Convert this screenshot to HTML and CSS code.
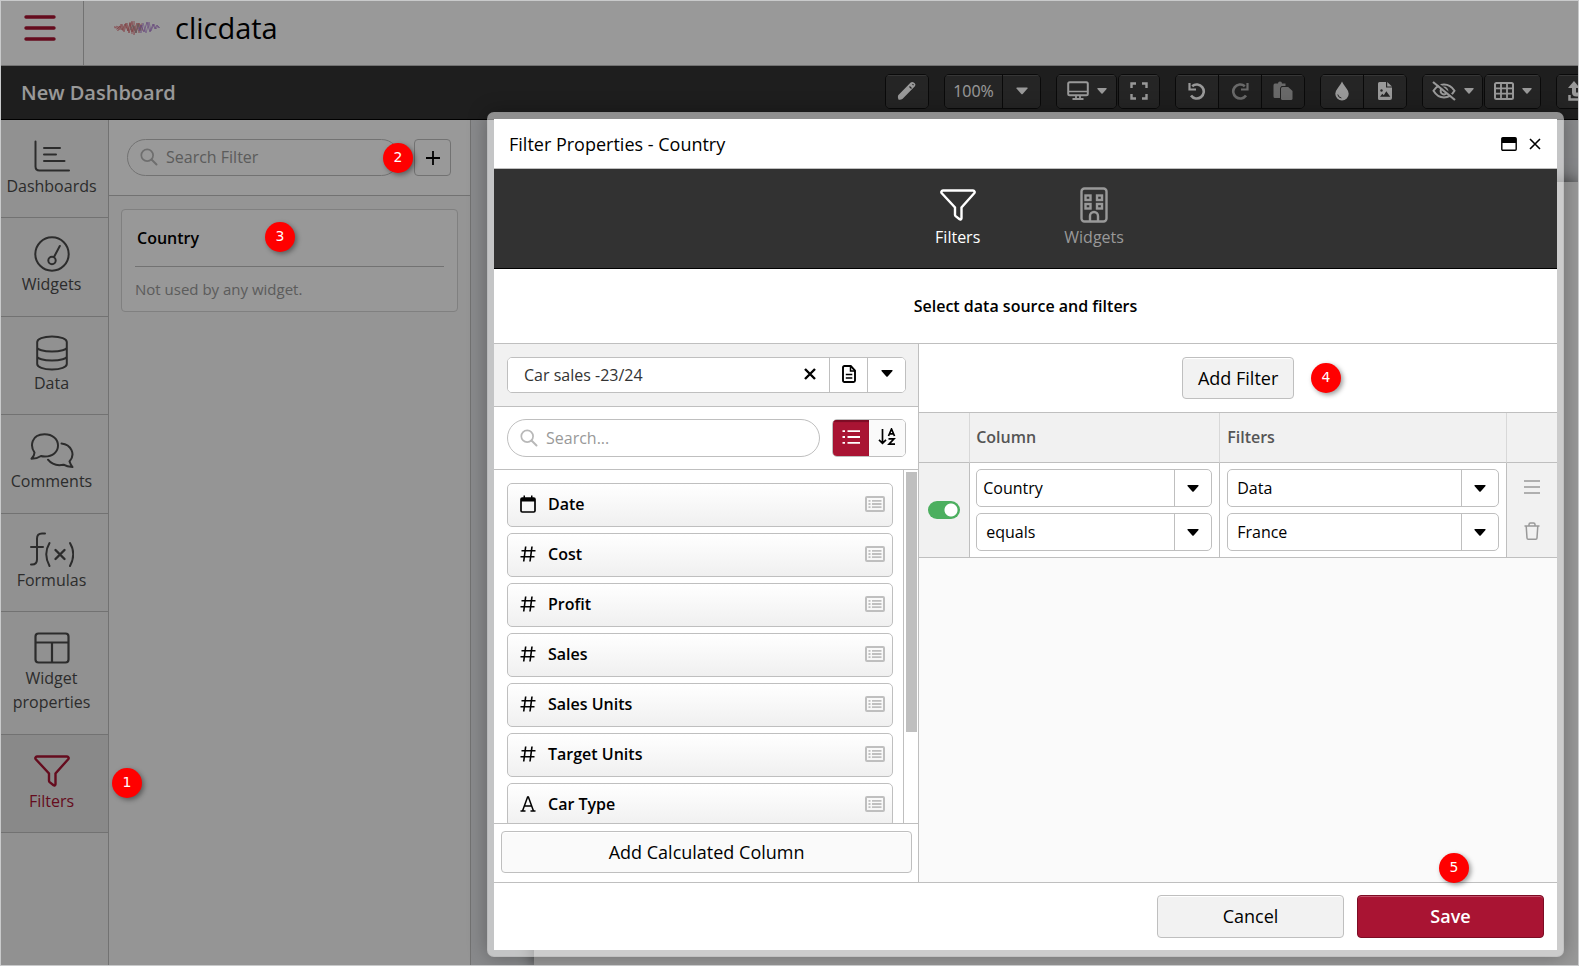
FILE: index.html
```html
<!DOCTYPE html>
<html lang="en">
<head>
<meta charset="utf-8">
<title>clicdata - New Dashboard</title>
<link rel="stylesheet" href="styles.css">
</head>
<body>
<svg class="sprite" aria-hidden="true">
  <symbol id="funnel" viewBox="0 0 36 32"><path d="M3 1.5h30a1.6 1.6 0 0 1 1.2 2.7L21.5 18.5v10.8a1.2 1.2 0 0 1-1.9 1l-4-3.2a1.6 1.6 0 0 1-.6-1.3v-7.3L1.8 4.2A1.6 1.6 0 0 1 3 1.5z" fill="none" stroke="currentColor" stroke-width="2.400"/></symbol>
  <symbol id="caret" viewBox="0 0 12 7"><path d="M1 0h10q1 0 .5 1L6.700 6.500q-.7.700-1.400 0L.5 1Q0 0 1 0z" fill="currentColor"/></symbol>
  <symbol id="search" viewBox="0 0 18 18"><circle cx="7.200" cy="7.200" r="5.900" fill="none" stroke="currentColor" stroke-width="1.700"/><path d="M11.500 11.500l5 5" stroke="currentColor" stroke-width="2" stroke-linecap="round"/></symbol>
  <symbol id="hash" viewBox="0 0 16 16"><path d="M5.700.5L3.700 15.500M12 .5l-2 15M1.500 4.800h14M.5 10.700h14" fill="none" stroke="currentColor" stroke-width="1.600"/></symbol>
  <symbol id="detail" viewBox="0 0 20 16"><rect x="1" y="1" width="18" height="14" rx="1" fill="none" stroke="currentColor" stroke-width="2"/><path d="M3.500 4.800h2M3.500 8h2M3.500 11.200h2M7 4.800h9.500M7 8h9.500M7 11.200h9.500" stroke="currentColor" stroke-width="1.800"/></symbol>
</svg>

<div class="frame">
  <header class="header">
    <button class="menu-button" aria-label="Menu">
      <svg width="32" height="28" viewBox="0 0 32 28"><path d="M2 3h28M2 14h28M2 25h28" stroke="currentColor" stroke-width="3.400" stroke-linecap="round"/></svg>
    </button>
    <a class="brand" href="#">
      <svg width="46" height="18" viewBox="0 0 46 18" fill="none" stroke-width=".8" opacity=".8">
        <path d="M0 9l3-2 2 4 3-6 2 8 3-9 2 10 3-12 2 14 3-12 2 10 2-8 2 6" stroke="#e0707a"/>
        <path d="M0 7l2 2 2-2 2 4 2-5 2 5 2-7 2 8 2-9 2 12 2-13 2 11 2-9 2 8 2-8" stroke="#e58a90"/>
        <path d="M1 8l3 4 3-7 2 7 3-8 3 10 3-11 2 9 3-8 2 6 2-5" stroke="#e07a80"/>
        <path d="M3 10l3-3 2 4 3-6 3 7 2-8 2 9 2-6 2 7 3-10 2 7" stroke="#c94a50"/>
        <path d="M16 11l3-5 3 8 2-9 2 7 2-6" stroke="#8a8a8a"/>
        <path d="M24 8l3 6 2-10 3 10 3-11 2 9 3-7 2 5 2-3 2 2" stroke="#b283d8"/>
        <path d="M25 12l2-6 3 7 3-10 3 10 3-8 2 5 2-4 2 3" stroke="#9a5bc4"/>
      </svg>
      <span>clicdata</span>
    </a>
  </header>

  <div class="toolbar">
    <h1 class="toolbar-title">New Dashboard</h1>
    <div class="tools">
      <div class="tool-group">
        <button class="tool" aria-label="Edit"><svg width="20" height="20" viewBox="0 0 20 20"><path d="M1.200 14.300L13.700 1.600q1.400-1.300 3-.2l1 .9q1.500 1.500.2 3L5.400 18q-2.400 1.400-4 .4-1.200-2-.2-4.100z" fill="currentColor"/><path d="M12.500 5.500l2 2M15.500 3.200l1 1" stroke="#3f3f3f" stroke-width="1.200"/></svg></button>
      </div>
      <div class="tool-group">
        <button class="tool tool-zoom">100%</button>
        <button class="tool tool-drop" aria-label="Zoom levels"><svg width="12" height="8"><use href="#caret"/></svg></button>
      </div>
      <div class="tool-row">
        <div class="tool-group">
          <button class="tool tool-wide" aria-label="Screen"><svg width="22" height="20" viewBox="0 0 22 20" fill="none" stroke="currentColor"><rect x="1.200" y="1.200" width="19.600" height="13" rx="1.500" stroke-width="2"/><path d="M1 10.600h20" stroke-width="1.500"/><path d="M9 14.500v3M13 14.500v3M5.500 18h11" stroke-width="1.800"/></svg><svg width="10" height="6"><use href="#caret"/></svg></button>
        </div>
        <div class="tool-group">
          <button class="tool tool-narrow" aria-label="Full screen"><svg width="18" height="18" viewBox="0 0 18 18"><path d="M1.500 6V1.500H6M12 1.500h4.500V6M16.500 12v4.500H12M6 16.500H1.500V12" fill="none" stroke="currentColor" stroke-width="2.400"/></svg></button>
        </div>
      </div>
      <div class="tool-group">
        <button class="tool" aria-label="Undo"><svg width="18" height="18" viewBox="0 0 18 18"><path d="M4.200 4.200A7 7 0 1 1 3 13.500" fill="none" stroke="currentColor" stroke-width="2.600"/><path d="M1.500 1v6.500H8" fill="none" stroke="currentColor" stroke-width="2.200"/></svg></button>
        <button class="tool tool-dim" aria-label="Redo"><svg width="18" height="18" viewBox="0 0 18 18"><path d="M13.800 4.200A7 7 0 1 0 15 13.500" fill="none" stroke="currentColor" stroke-width="2.600"/><path d="M16.500 1v6.500H10" fill="none" stroke="currentColor" stroke-width="2.200"/></svg></button>
        <button class="tool tool-dim" aria-label="Paste"><svg width="20" height="20" viewBox="0 0 20 20"><path d="M2 2.500h3a2 2 0 0 1 4 0h3.500V5H8.500L7 7v10H2q-1.500 0-1.500-1.500v-11Q.5 2.500 2 2.500z" fill="currentColor"/><path d="M9.500 6h5.700L19.500 10v7.500q0 1.500-1.500 1.500H9.500Q8 19 8 17.500v-10Q8 6 9.500 6z" fill="currentColor"/></svg></button>
      </div>
      <div class="tool-group">
        <button class="tool" aria-label="Theme colour"><svg width="16" height="20" viewBox="0 0 16 20"><path d="M8 .5q1 2.500 4 6.300 2.700 3.400 2.700 6a6.700 6.700 0 0 1-13.400 0q0-2.600 2.700-6Q7 3 8 .5z" fill="currentColor"/><path d="M3.800 13.500q.5 3 3.600 3.500" fill="none" stroke="#3f3f3f"/></svg></button>
        <button class="tool" aria-label="Background image"><svg width="16" height="20" viewBox="0 0 16 20"><path d="M2.500 1H9v5.500h6V17q0 2-2 2H2.500Q1 19 1 17.500v-15Q1 1 2.500 1z" fill="currentColor"/><path d="M10.200 1L15 5.500h-4.800z" fill="currentColor"/><circle cx="4.500" cy="9.500" r="1.200" fill="#3f3f3f"/><path d="M3 15.800l2.300-3 1.500 1.500 2.500-4 4 5.500z" fill="#3f3f3f"/></svg></button>
      </div>
      <div class="tool-row">
        <div class="tool-group">
          <button class="tool tool-wide" aria-label="Visibility"><svg width="24" height="20" viewBox="0 0 24 20" fill="none" stroke="currentColor"><path d="M1.500 9.800Q5.500 3.500 12 3.500t10.500 6.300Q18.500 16.500 12 16.500T1.500 9.800z" stroke-width="2"/><circle cx="12" cy="10" r="3.400" stroke-width="2"/><path d="M2.800 0L24 18" stroke="#3f3f3f" stroke-width="2"/><path d="M1 1l22 18" stroke-width="2.200"/></svg><svg width="10" height="6"><use href="#caret"/></svg></button>
        </div>
        <div class="tool-group">
          <button class="tool tool-grid" aria-label="Grid"><svg width="20" height="18" viewBox="0 0 20 18" fill="none" stroke="currentColor"><rect x="1" y="1" width="18" height="16" rx="1.500" stroke-width="2"/><path d="M7 1v16M13 1v16M1 6.300h18M1 11.700h18" stroke-width="1.800"/></svg><svg width="10" height="6"><use href="#caret"/></svg></button>
        </div>
      </div>
      <div class="tool-group">
        <button class="tool" aria-label="Publish"><svg width="22" height="22" viewBox="0 0 22 22" fill="none" stroke="currentColor"><path d="M7 6v6.500q0 2 2.500 2H15" stroke-width="4"/><path d="M1 8l6-7 6 7z" fill="currentColor" stroke="none"/><path d="M2.500 15v4.500H20V16" stroke-width="2.500"/></svg></button>
      </div>
    </div>
  </div>

  <div class="workspace">
    <nav class="sidebar">
      <a class="side-item" href="#"><span class="side-icon"><svg width="36" height="32" viewBox="0 0 36 32" fill="none" stroke="currentColor" stroke-width="2" stroke-linecap="round"><path d="M1.500 1.500v25q0 4 4 4H35M10 8h16M10 14.500h12M10 21h20.500"/></svg></span>Dashboards</a>
      <a class="side-item" href="#"><span class="side-icon"><svg width="36" height="36" viewBox="0 0 36 36" fill="none" stroke="currentColor" stroke-width="2" stroke-linecap="round"><circle cx="18" cy="18" r="16.700"/><circle cx="18" cy="24.500" r="3.700"/><path d="M20 21l5.800-11"/></svg></span>Widgets</a>
      <a class="side-item" href="#"><span class="side-icon"><svg width="32" height="36" viewBox="0 0 32 36" fill="none" stroke="currentColor" stroke-width="2"><path d="M1.200 7v22c0 3 6 5.500 14.800 5.500S30.800 32 30.800 29V7M1.200 7C1.200 4 7 1.500 16 1.500S30.800 4 30.800 7M1.200 12.500c0 2 6 4 14.800 4s14.800-2 14.800-4M1.200 21.500c0 2 6 4 14.800 4s14.800-2 14.800-4"/></svg></span>Data</a>
      <a class="side-item" href="#"><span class="side-icon"><svg width="44" height="36" viewBox="0 0 44 36" fill="none" stroke="currentColor" stroke-width="2" stroke-linecap="round" stroke-linejoin="round"><path d="M4.500 19.500C0 13 1 1.500 14.500 1.300 22.500 1.300 28 6 28 12.500S22.500 23.500 15 23.500q-2.500 0-4-.5-4 2.800-9.500 2.800 3-3 3-6.300zM31.500 10.500C41 11.500 46 21 39.500 28.500q1 3 3 5.500-5.500 0-9-2.300-10 2-15.500-5"/></svg></span>Comments</a>
      <a class="side-item" href="#"><span class="side-icon"><svg width="44" height="36" viewBox="0 0 44 36" fill="none" stroke="currentColor" stroke-width="2" stroke-linecap="round"><path d="M15 1.500h-3q-5 0-5 5v21q0 5-5 5h-1M1 15h12"/><path d="M19.500 11q-6.500 11 0 23M40 11q6.500 11 0 23"/><path d="M25.500 18l9 9M34.500 18l-9 9" stroke-width="2.400"/></svg></span>Formulas</a>
      <a class="side-item" href="#"><span class="side-icon"><svg width="36" height="32" viewBox="0 0 36 32" fill="none" stroke="currentColor" stroke-width="2.200"><rect x="1.500" y="1.500" width="33" height="29" rx="3"/><path d="M1.500 10.500h33M18 10.500v20"/></svg></span>Widget properties</a>
      <a class="side-item side-item-active" href="#"><span class="side-icon"><svg width="36" height="32"><use href="#funnel"/></svg></span>Filters</a>
    </nav>

    <section class="filter-panel">
      <div class="panel-search">
        <label class="search-box search-box-panel"><svg width="18" height="18"><use href="#search"/></svg><input type="text" placeholder="Search Filter" aria-label="Search Filter"></label>
        <button class="add-button" aria-label="Add filter"><svg width="16" height="16" viewBox="0 0 16 16"><path d="M8 1v14M1 8h14" stroke="currentColor" stroke-width="1.800"/></svg></button>
      </div>
      <article class="filter-card">
        <h2 class="filter-name">Country</h2>
        <p class="filter-usage">Not used by any widget.</p>
      </article>
    </section>

    <main class="canvas"><div class="canvas-page"></div></main>
  </div>

  <div class="overlay">
    <div class="dialog" role="dialog" aria-labelledby="dialog-title">
      <div class="dialog-title-bar">
        <h2 class="dialog-title" id="dialog-title">Filter Properties - Country</h2>
        <button class="plain-button" aria-label="Maximize"><svg width="16" height="14" viewBox="0 0 16 14"><rect x=".8" y=".8" width="14.400" height="12.400" rx="1" fill="none" stroke="currentColor" stroke-width="1.400"/><path d="M1 1h14v5H1z" fill="currentColor"/></svg></button>
        <button class="plain-button" aria-label="Close"><svg width="12" height="12" viewBox="0 0 12 12"><path d="M1 1l10 10M11 1L1 11" stroke="currentColor" stroke-width="1.600"/></svg></button>
      </div>

      <nav class="dialog-tabs">
        <a class="tab tab-active" href="#"><span class="side-icon"><svg width="36" height="32"><use href="#funnel"/></svg></span>Filters</a>
        <a class="tab" href="#"><span class="side-icon"><svg width="28" height="36" viewBox="0 0 28 36" fill="none" stroke="currentColor" stroke-width="2.400"><rect x="1.500" y="1.500" width="25" height="33" rx="3"/><rect x="5.500" y="8.500" width="5" height="4.500"/><rect x="17" y="8.500" width="5" height="4.500"/><rect x="5.500" y="17" width="5" height="4.500"/><rect x="17" y="17" width="5" height="4.500"/><path d="M10 34.500V29a4 4 0 0 1 8 0v5.500"/></svg></span>Widgets</a>
      </nav>

      <p class="dialog-heading">Select data source and filters</p>

      <div class="dialog-body">
        <section class="source">
          <div class="source-picker">
            <div class="combo">
              <input type="text" value="Car sales -23/24" aria-label="Data source">
              <button class="combo-clear" aria-label="Clear"><svg width="12" height="12" viewBox="0 0 12 12"><path d="M1 1l10 10M11 1L1 11" stroke="currentColor" stroke-width="2.400"/></svg></button>
              <button class="combo-button" aria-label="Open source"><svg width="14" height="18" viewBox="0 0 14 18" fill="none" stroke="currentColor"><path d="M1 2.500Q1 1 2.500 1h6.300L13 5.500v10q0 1.500-1.500 1.500h-9Q1 17 1 15.500z" stroke-width="1.900"/><path d="M8.500 1v5H13" stroke-width="1.500"/><path d="M3.800 9.500h6.500M3.800 13h6.500" stroke-width="1.500"/></svg></button>
              <button class="combo-button" aria-label="Choose source"><svg width="12" height="7"><use href="#caret"/></svg></button>
            </div>
          </div>
          <div class="column-search">
            <label class="search-box"><svg width="18" height="18"><use href="#search"/></svg><input type="text" placeholder="Search..." aria-label="Search columns"></label>
            <div class="view-toggle">
              <button class="view-button view-button-active" aria-label="List order"><svg width="18" height="16" viewBox="0 0 18 16"><path d="M5.500 2.200H18M5.500 8H18M5.500 13.800H18M.5 2.200H3M.5 8H3M.5 13.800H3" stroke="currentColor" stroke-width="1.800"/></svg></button>
              <button class="view-button" aria-label="Sort alphabetically"><svg width="18" height="18" viewBox="0 0 18 18" fill="none" stroke="currentColor"><path d="M4.500 1v14M1 11.800l3.500 3.500L8 11.800" stroke-width="1.700"/><path d="M10.500 8l3-7 3 7M11.500 5.800h4M10.500 10.800h5.500l-5 5.400h6" stroke-width="1.700"/></svg></button>
            </div>
          </div>
          <div class="column-area">
            <ul class="column-list">
              <li class="column"><svg width="16" height="18" viewBox="0 0 16 18"><rect x="1" y="3" width="14" height="14" rx="1.300" fill="none" stroke="currentColor" stroke-width="1.700"/><path d="M1 3h14v3.500H1zM3.500.5h1.500v3H3.500zM11 .5h1.500v3H11z" fill="currentColor"/></svg><span>Date</span><svg class="detail" width="20" height="16"><use href="#detail"/></svg></li>
              <li class="column"><svg width="16" height="16"><use href="#hash"/></svg><span>Cost</span><svg class="detail" width="20" height="16"><use href="#detail"/></svg></li>
              <li class="column"><svg width="16" height="16"><use href="#hash"/></svg><span>Profit</span><svg class="detail" width="20" height="16"><use href="#detail"/></svg></li>
              <li class="column"><svg width="16" height="16"><use href="#hash"/></svg><span>Sales</span><svg class="detail" width="20" height="16"><use href="#detail"/></svg></li>
              <li class="column"><svg width="16" height="16"><use href="#hash"/></svg><span>Sales Units</span><svg class="detail" width="20" height="16"><use href="#detail"/></svg></li>
              <li class="column"><svg width="16" height="16"><use href="#hash"/></svg><span>Target Units</span><svg class="detail" width="20" height="16"><use href="#detail"/></svg></li>
              <li class="column"><svg width="16" height="16" viewBox="0 0 16 16" fill="none" stroke="currentColor" stroke-width="1.500"><path d="M2.500 15L7.600 1h.8l5.100 14M4.500 10h7M.5 15h5M10.500 15h5"/></svg><span>Car Type</span><svg class="detail" width="20" height="16"><use href="#detail"/></svg></li>
            </ul>
            <div class="scrollbar"><div class="scrollbar-thumb"></div></div>
          </div>
          <div class="source-footer"><button class="button button-calc">Add Calculated Column</button></div>
        </section>

        <section class="conditions">
          <div class="conditions-head"><button class="button button-add">Add Filter</button></div>
          <table class="condition-table">
            <thead>
              <tr><th class="cell-toggle"></th><th class="cell-column">Column</th><th>Filters</th><th class="cell-actions"></th></tr>
            </thead>
            <tbody>
              <tr>
                <td class="cell-toggle"><input class="switch" type="checkbox" checked aria-label="Filter enabled"></td>
                <td class="cell-column">
                  <div class="stack">
                    <div class="select select-column"><select aria-label="Column"><option>Country</option></select><svg width="12" height="7"><use href="#caret"/></svg></div>
                    <div class="select"><select aria-label="Operator"><option>equals</option></select><svg width="12" height="7"><use href="#caret"/></svg></div>
                  </div>
                </td>
                <td>
                  <div class="stack">
                    <div class="select"><select aria-label="Value type"><option>Data</option></select><svg width="12" height="7"><use href="#caret"/></svg></div>
                    <div class="select"><select aria-label="Value"><option>France</option></select><svg width="12" height="7"><use href="#caret"/></svg></div>
                  </div>
                </td>
                <td class="cell-actions">
                  <div class="stack">
                    <button class="row-button" aria-label="Reorder"><svg width="16" height="14" viewBox="0 0 16 14"><path d="M0 1h16M0 7h16M0 13h16" stroke="currentColor" stroke-width="1.500"/></svg></button>
                    <button class="row-button" aria-label="Delete"><svg width="16" height="18" viewBox="0 0 16 18" fill="none" stroke="currentColor" stroke-width="1.500"><path d="M.5 4h15M2.200 4l.8 12q.1 1.200 1.200 1.200h7.600q1.100 0 1.200-1.200l.8-12M5 4V2.500Q5 1 6.500 1h3Q11 1 11 2.500V4"/></svg></button>
                  </div>
                </td>
              </tr>
            </tbody>
          </table>
        </section>
      </div>

      <div class="dialog-footer">
        <button class="button button-wide">Cancel</button>
        <button class="button button-wide button-primary">Save</button>
      </div>
    </div>
    <span class="step step-1">1</span>
    <span class="step step-2">2</span>
    <span class="step step-3">3</span>
    <span class="step step-4">4</span>
    <span class="step step-5">5</span>
  </div>
</div>
</body>
</html>
```

FILE: styles.css
```css
:root {
  --line: #bfbfbf;
  --crimson: #a91433;
  --ink: #4a4a4a;
  --soft: #f1f1f1;
}

* { box-sizing: border-box; }

body {
  margin: 0;
  font: 16px/24px "Open Sans", "Noto Sans", sans-serif;
  color: #000;
}

h1, h2, p, ul { margin: 0; padding: 0; }
a { color: inherit; text-decoration: none; }
button, input, select { font: inherit; color: inherit; margin: 0; }
button { padding: 0; cursor: pointer; }
svg { display: block; flex: none; }

.sprite { position: absolute; width: 0; height: 0; }

.frame {
  position: relative;
  display: flex;
  flex-direction: column;
  height: 100vh;
  border: 1px solid #c9cacb;
  overflow: hidden;
}

/* Header */
.header {
  display: flex;
  flex: none;
  height: 65px;
  border-bottom: 1px solid var(--line);
  background: #fff;
}
.menu-button {
  display: flex;
  justify-content: center;
  width: 83px;
  padding: 13px 5px 0 0;
  border: 0;
  border-right: 1px solid var(--line);
  background: none;
  color: var(--crimson);
}
.brand {
  display: flex;
  align-items: center;
  gap: 15px;
  height: 54px;
  padding-left: 30px;
  font-size: 29px;
  font-weight: 500;
}

/* Toolbar */
.toolbar {
  display: flex;
  flex: none;
  height: 54px;
  padding: 8px 0 0 20px;
  border-bottom: 1px solid #000;
  background: #323232;
  color: #fff;
}
.toolbar-title {
  flex: 1;
  font-size: 20px;
  font-weight: 600;
  line-height: 38px;
}
.tools { display: flex; gap: 15px; margin-right: -22px; }
.tool-row { display: flex; gap: 1px; }
.tool-group {
  display: flex;
  height: 35px;
  border: 1px solid #111;
  border-radius: 5px;
  overflow: hidden;
}
.tool {
  display: flex;
  align-items: center;
  justify-content: center;
  gap: 8px;
  width: 42px;
  padding-bottom: 2px;
  border: 0;
  background: #3f3f3f;
  box-shadow: inset 0 1px #5a5a5a;
  color: #fff;
}
.tool + .tool { width: 43px; border-left: 1px solid #111; }
.tool-group .tool-zoom { width: 57px; }
.tool-group .tool-drop { width: 38px; }
.tool-wide { width: 59px; }
.tool-grid { width: 55px; }
.tool-narrow { width: 40px; }
.tool-dim { color: #b0b0b0; background: #383838; }

/* Workspace */
.workspace { display: flex; flex: 1; min-height: 0; }
.sidebar {
  flex: none;
  width: 108px;
  border-right: 1px solid var(--line);
  background: #f2f2f2;
  color: var(--ink);
}
.side-item {
  display: block;
  padding: 18px 9px 19px 3px;
  border-bottom: 1px solid var(--line);
  text-align: center;
}
.side-item:nth-child(even) { padding-bottom: 20px; }
.side-item-active { background: #e5e5e5; color: var(--crimson); }
.side-icon {
  display: flex;
  align-items: center;
  justify-content: center;
  height: 36px;
}

.filter-panel {
  flex: none;
  width: 362px;
  border-right: 1px solid var(--line);
  background: #f9f9f9;
}
.panel-search {
  display: flex;
  gap: 14px;
  padding: 19px 19px 19px 18px;
  border-bottom: 1px solid var(--line);
  background: #fff;
}
.search-box {
  display: flex;
  flex: 1;
  align-items: center;
  gap: 8px;
  height: 38px;
  padding: 0 12px;
  border: 1px solid var(--line);
  border-radius: 19px;
  background: #fff;
  color: #b8b8b8;
}
.search-box input {
  flex: 1;
  min-width: 0;
  padding: 0;
  border: 0;
  outline: 0;
  background: none;
  color: #000;
}
.search-box input::placeholder { color: #999; opacity: 1; }
.search-box-panel { height: 37px; padding-bottom: 1px; }
.add-button {
  display: flex;
  align-items: center;
  justify-content: center;
  width: 37px;
  height: 37px;
  border: 1px solid var(--line);
  border-radius: 4px;
  background: #fff;
}
.filter-card {
  margin: 13px 12px;
  padding: 16px 13px 10px;
  border: 1px solid #d5d5d5;
  border-radius: 4px;
  background: #fdfdfd;
}
.filter-name {
  padding: 0 2px 16px;
  border-bottom: 1px solid var(--line);
  font-size: 16px;
  font-weight: 600;
}
.filter-usage { padding-top: 10px; color: #999; font-size: 15px; }

.canvas {
  flex: 1;
  padding: 62px 0 0 63px;
  background: #e4e6ea;
  overflow: hidden;
}
.canvas-page {
  height: 100%;
  background: #fff;
  box-shadow: 0 0 16px #555;
}

/* Dialog */
.overlay {
  position: absolute;
  inset: 0;
  display: flex;
  padding: 111px 14px 8px 486px;
  background: rgba(0, 0, 0, .4);
}
.dialog {
  display: flex;
  flex: 1;
  flex-direction: column;
  min-width: 0;
  border: 7px solid rgba(255, 255, 255, .5);
  border-radius: 7px;
  background: #fff padding-box;
  box-shadow: 0 0 20px rgba(0, 0, 0, .3);
}
.dialog-title-bar {
  display: flex;
  align-items: center;
  gap: 12px;
  height: 50px;
  padding: 0 16px 0 15px;
  border-bottom: 1px solid var(--line);
}
.dialog-title { flex: 1; font-size: 18px; font-weight: 500; }
.plain-button { padding: 0; border: 0; background: none; }
.dialog-tabs {
  display: flex;
  justify-content: center;
  gap: 84px;
  height: 100px;
  padding: 18px 0 0 8px;
  border-bottom: 1px solid #000;
  background: #323232;
  color: #999;
  text-align: center;
}
.tab { display: flex; flex-direction: column; gap: 2px; font-weight: 500; }
.tab-active { color: #fff; }
.dialog-heading {
  padding: 25px 0;
  border-bottom: 1px solid var(--line);
  font-weight: 600;
  text-align: center;
}
.dialog-body {
  display: grid;
  flex: 1;
  grid-template-columns: 2fr 3fr;
  grid-template-rows: minmax(0, 1fr);
  min-height: 0;
}
.source {
  display: flex;
  flex-direction: column;
  min-width: 0;
  border-right: 1px solid var(--line);
}
.source-picker {
  padding: 13px 12px 13px 13px;
  border-bottom: 1px solid var(--line);
  background: var(--soft);
}
.combo {
  display: flex;
  height: 36px;
  border: 1px solid var(--line);
  border-radius: 5px;
  background: #fff;
  overflow: hidden;
}
.combo input {
  flex: 1;
  min-width: 0;
  padding: 0 16px;
  border: 0;
  outline: 0;
  color: #333;
}
.combo-clear, .combo-button {
  display: flex;
  align-items: center;
  justify-content: center;
  width: 38px;
  padding-bottom: 3px;
  border: 0;
  background: #fff;
}
.combo-button { border-left: 1px solid var(--line); }
.column-search {
  display: flex;
  gap: 12px;
  padding: 12px 12px 12px 13px;
  border-bottom: 1px solid var(--line);
}
.view-toggle {
  display: flex;
  height: 38px;
  border: 1px solid var(--line);
  border-radius: 5px;
  overflow: hidden;
}
.view-button {
  display: flex;
  align-items: center;
  justify-content: center;
  width: 36px;
  padding-bottom: 2px;
  border: 0;
  background: #fafafa;
}
.view-button-active {
  background: var(--crimson);
  box-shadow: inset 0 2px 1px #7c0c24;
  color: #fff;
}
.column-area { display: flex; flex: 1; min-height: 0; overflow: hidden; }
.column-list {
  display: flex;
  flex: 1;
  flex-direction: column;
  gap: 6px;
  min-width: 0;
  padding: 13px 10px 0 13px;
  list-style: none;
}
.column {
  display: flex;
  flex: none;
  align-items: center;
  gap: 12px;
  height: 44px;
  padding: 0 7px 3px 12px;
  border: 1px solid var(--line);
  border-radius: 5px;
  background: linear-gradient(#fff, #f0f0f0);
  font-weight: 600;
}
.column span { flex: 1; }
.detail { color: var(--line); }
.scrollbar {
  flex: none;
  width: 15px;
  padding: 2px 1px 0 2px;
  border-left: 1px solid var(--line);
}
.scrollbar-thumb { height: 260px; background: var(--line); }
.source-footer {
  padding: 7px 6px 9px 7px;
  border-top: 1px solid var(--line);
}
.button {
  height: 42px;
  border: 1px solid var(--line);
  border-radius: 4px;
  background: #f2f2f2;
  box-shadow: inset 0 1px #fff;
  font-size: 18px;
  font-weight: 500;
}
.button-calc { width: 100%; background: #fafafa; font-weight: 400; }

.conditions { min-width: 0; background: #fafafa; }
.conditions-head {
  padding: 13px;
  border-bottom: 1px solid var(--line);
  background: #fff;
  text-align: center;
}
.button-add { display: block; margin: 0 auto; padding: 0 15px; }
.condition-table {
  width: 100%;
  border-collapse: separate;
  border-spacing: 0;
  table-layout: fixed;
}
.condition-table th,
.condition-table td {
  padding: 0 7px;
  border-right: 1px solid var(--line);
  border-bottom: 1px solid var(--line);
  text-align: left;
}
.condition-table th {
  height: 50px;
  padding-bottom: 2px;
  border-right-color: #d8d8d8;
  background: var(--soft);
  color: #555;
  font-weight: 600;
}
.condition-table td { padding: 6px 7px; background: #fff; }
.condition-table .cell-toggle { width: 51px; background: var(--soft); text-align: center; }
.condition-table .cell-column { width: 250px; padding-left: 6px; }
.condition-table .cell-actions { width: 50px; border-right: 0; background: var(--soft); }
.stack { display: flex; flex-direction: column; gap: 6px; }
.select {
  position: relative;
  height: 38px;
  border: 1px solid var(--line);
  border-radius: 5px;
  background: #fff linear-gradient(var(--line), var(--line)) right 36px top / 1px 100% no-repeat;
}
.select select {
  width: 100%;
  height: 100%;
  padding: 0 40px 0 9px;
  border: 0;
  outline: 0;
  appearance: none;
  background: none;
}
.select-column select { padding-left: 6px; }
.select svg {
  position: absolute;
  top: 15px;
  right: 12px;
  pointer-events: none;
}
.row-button {
  display: flex;
  align-items: center;
  justify-content: center;
  height: 38px;
  padding-bottom: 2px;
  border: 0;
  background: none;
  color: #999;
}
.switch {
  appearance: none;
  display: block;
  width: 32px;
  height: 18px;
  margin: 0 auto;
  border-radius: 9px;
  background: radial-gradient(circle at 23px 9px, #fff 6px, transparent 7px) #4caf5f;
}

.dialog-footer {
  display: flex;
  justify-content: flex-end;
  gap: 13px;
  padding: 12px 13px;
  border-top: 1px solid var(--line);
}
.button-wide { width: 187px; height: 43px; padding-bottom: 2px; }
.button-primary {
  border-color: #7c0c24;
  background: var(--crimson);
  box-shadow: inset 0 1px #c4506a;
  color: #fff;
  font-weight: 600;
}

/* Numbered walkthrough markers */
.step {
  position: absolute;
  width: 30px;
  height: 30px;
  border-radius: 50%;
  background: #f00;
  box-shadow: 2px 2px 5px rgba(0, 0, 0, .4);
  color: #fff;
  font: 14px/29px "DejaVu Sans", sans-serif;
  text-align: center;
}
.step-1 { left: 111px; top: 767px; }
.step-2 { left: 382px; top: 142px; }
.step-3 { left: 264px; top: 221px; }
.step-4 { right: 237px; top: 362px; }
.step-5 { right: 109px; bottom: 82px; }
```
